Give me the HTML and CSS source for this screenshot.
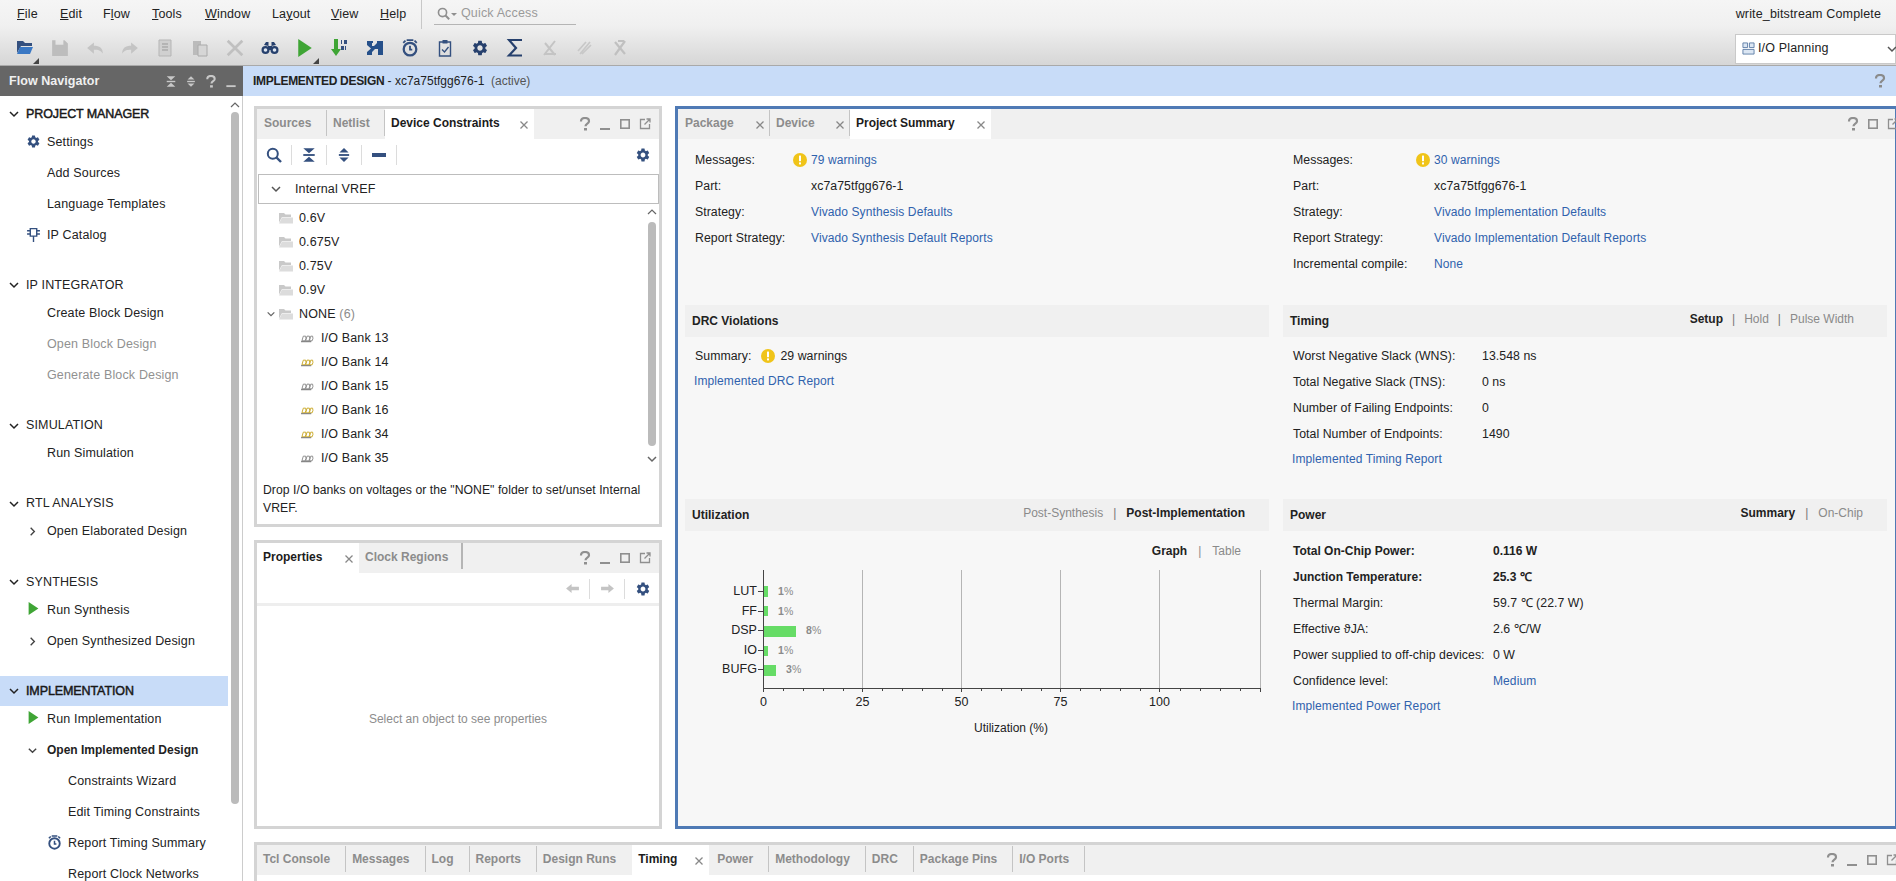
FILE: index.html
```html
<!DOCTYPE html>
<html lang="en">
<head>
<meta charset="utf-8">
<title>Vivado</title>
<link rel="stylesheet" href="styles.css">
</head>
<body>
<svg class="defs" xmlns="http://www.w3.org/2000/svg">
  <symbol id="gear" viewBox="0 0 24 24"><path fill-rule="evenodd" d="M19.14 12.94c.04-.3.06-.61.06-.94 0-.32-.02-.64-.07-.94l2.03-1.58a.49.49 0 0 0 .12-.61l-1.92-3.32a.488.488 0 0 0-.59-.22l-2.39.96c-.5-.38-1.03-.7-1.62-.94l-.36-2.54a.484.484 0 0 0-.48-.41h-3.84c-.24 0-.43.17-.47.41l-.36 2.54c-.59.24-1.13.57-1.62.94l-2.39-.96c-.22-.08-.47 0-.59.22L2.74 8.87c-.12.21-.08.47.12.61l2.03 1.58c-.05.3-.09.63-.09.94s.02.64.07.94l-2.03 1.58a.49.49 0 0 0-.12.61l1.92 3.32c.12.22.37.29.59.22l2.39-.96c.5.38 1.03.7 1.62.94l.36 2.54c.05.24.24.41.48.41h3.84c.24 0 .44-.17.47-.41l.36-2.54c.59-.24 1.13-.56 1.62-.94l2.39.96c.22.08.47 0 .59-.22l1.92-3.32c.12-.22.07-.47-.12-.61l-2.01-1.58zM12 15.6c-1.98 0-3.6-1.62-3.6-3.6s1.62-3.6 3.6-3.6 3.6 1.62 3.6 3.6-1.62 3.6-3.6 3.6z"/></symbol>
  <symbol id="chev" viewBox="0 0 12 12"><path d="M2 4l4 4 4-4" fill="none" stroke="currentColor" stroke-width="1.5"/></symbol>
  <symbol id="up" viewBox="0 0 12 12"><path d="M2 8l4-4 4 4" fill="none" stroke="currentColor" stroke-width="1.2"/></symbol>
  <symbol id="play" viewBox="0 0 16 16"><path d="M2 0l12 8-12 8z" fill="#3fa535"/></symbol>
  <symbol id="timer" viewBox="0 0 16 16"><circle cx="8" cy="9" r="5.6" fill="none" stroke="#34507f" stroke-width="2"/><path d="M8 6v3.5h2M5 1h6M2 3.5l2-2M14 3.5l-2-2" fill="none" stroke="#34507f" stroke-width="1.6"/></symbol>
  <symbol id="warn" viewBox="0 0 14 14"><circle cx="7" cy="7" r="7" fill="#f0c419"/><rect x="6" y="2.6" width="2" height="5.6" fill="#fff"/><rect x="6" y="9.4" width="2" height="2" fill="#fff"/></symbol>
  <symbol id="folder" viewBox="0 0 14 14"><path d="M0 2h5l1.500 1.500H12V6H3L0 11.500z" fill="#c9c9c9"/><path d="M0 12.500L3 6.500h11V12.500z" fill="#dcdcdc"/></symbol>
  <symbol id="bank" viewBox="0 0 14 10"><path d="M1 8l1.500-5h2.500q1 2.500-.5 5zM5 8l1.500-5h2.500q1 2.500-.5 5zM9 8l1.500-5h2q1 2.500-.5 5z" fill="none" stroke="currentColor" stroke-width="1"/><path d="M0 9h11" stroke="#666" stroke-width="1"/></symbol>
  <symbol id="q" viewBox="0 0 12 14"><path d="M2 4.500C2 2 3.800 1 6 1s4 1 4 3.200c0 2.500-3.500 2.300-3.500 5" fill="none" stroke="currentColor" stroke-width="2.200"/><rect x="5" y="11" width="3" height="2.500" fill="currentColor"/></symbol>
  <symbol id="min" viewBox="0 0 12 14"><rect x="1" y="11" width="10" height="2" fill="currentColor"/></symbol>
  <symbol id="max" viewBox="0 0 12 14"><rect x="1.800" y="2.800" width="8.400" height="8.400" fill="none" stroke="currentColor" stroke-width="1.600"/></symbol>
  <symbol id="ext" viewBox="0 0 12 14"><path d="M6 2.500H1.500v9h9V7M5.500 7.500L11 2M7.500 2H11v3.500" fill="none" stroke="currentColor" stroke-width="1.300"/></symbol>
  <symbol id="close" viewBox="0 0 10 10"><path d="M1.500 1.500l7 7M8.500 1.500l-7 7" fill="none" stroke="currentColor" stroke-width="1.300"/></symbol>
  <symbol id="collapse" viewBox="0 0 14 14"><path d="M2 1h10L7 5.500zM2 13h10L7 8.500z" fill="currentColor"/><rect x="2" y="6.200" width="10" height="1.600" fill="currentColor"/></symbol>
  <symbol id="expand" viewBox="0 0 14 14"><path d="M3 4.800h8L7 .8zM3 9.200h8l-4 4z" fill="currentColor"/><rect x="2.500" y="6.200" width="9" height="1.600" fill="currentColor"/></symbol>
  <symbol id="search" viewBox="0 0 16 16"><circle cx="6.800" cy="6.800" r="5" fill="none" stroke="currentColor" stroke-width="2"/><path d="M10.500 10.500l4.500 4.500" stroke="currentColor" stroke-width="2.400"/></symbol>
  <symbol id="left" viewBox="0 0 16 12"><path d="M1 6l6-5v3h8v4H7v3z" fill="currentColor"/></symbol>
  <symbol id="right" viewBox="0 0 16 12"><path d="M15 6L9 1v3H1v4h8v3z" fill="currentColor"/></symbol>
  <symbol id="ipcat" viewBox="0 0 14 14"><path d="M4 1.500h6v7H4zM7 8.500V14M1 3.500h3M1 6.500h3M10 3.500h3M10 6.500h3" fill="none" stroke="#34507f" stroke-width="1.300"/></symbol>
  <symbol id="open" viewBox="0 0 18 18"><path d="M1 2h6l2 2h7v3H5L1 14z" fill="#34507f"/><path d="M1 15l3-7h13l-3 7z" fill="#3a78c4"/></symbol>
  <symbol id="save" viewBox="0 0 16 16"><path d="M1 1h11l3 3v11H1zM4 1v4h7V1M4 15v-5h8v5" fill="#bdbdbd"/></symbol>
  <symbol id="undo" viewBox="0 0 16 14"><path d="M1 7l6-5v3c5 0 8 2 8 7-2-3-4-3.500-8-3.500V12z" fill="#c4c4c4"/></symbol>
  <symbol id="redo" viewBox="0 0 16 14"><path d="M15 7L9 2v3C4 5 1 7 1 12c2-3 4-3.500 8-3.500V12z" fill="#c4c4c4"/></symbol>
  <symbol id="copy" viewBox="0 0 16 18"><path d="M2 1h12v16H2z" fill="#d0d0d0" stroke="#b5b5b5"/><path d="M5 5h6M5 8h6M5 11h6" stroke="#999"/></symbol>
  <symbol id="paste" viewBox="0 0 16 18"><path d="M1 2h8v14H1z" fill="#bbb"/><path d="M6 6h9v11H6z" fill="#d6d6d6" stroke="#aaa"/></symbol>
  <symbol id="cross" viewBox="0 0 16 16"><path d="M1.500 1.500l13 13M14.500 1.500l-13 13" stroke="#c0c0c0" stroke-width="2.400"/></symbol>
  <symbol id="bino" viewBox="0 0 18 14"><circle cx="4.500" cy="9" r="4" fill="#26406d"/><circle cx="13.500" cy="9" r="4" fill="#26406d"/><path d="M3 4l2-3h2.500v4M15 4l-2-3h-2.500v4" fill="#26406d"/><rect x="7" y="5" width="4" height="4" fill="#26406d"/><circle cx="4.500" cy="9" r="1.800" fill="#dfe7f2"/><circle cx="13.500" cy="9" r="1.800" fill="#dfe7f2"/></symbol>
  <symbol id="bit" viewBox="0 0 18 18"><path d="M3 0h4v10h3l-5 7-5-7h3z" fill="#3fa535"/><path d="M10 1h1v4h-1zM13 1h3v4h-3zM10 7h3v4h-3zM14 7h1v4h-1z" fill="#34507f"/></symbol>
  <symbol id="route" viewBox="0 0 18 18"><path d="M1 2h6v2H6v3h2l3-3V2h6v14h-5v-6H9l-3 3v3H1v-3l4-3.500L1 6z" fill="#26508a"/></symbol>
  <symbol id="clip" viewBox="0 0 14 18"><path d="M1.500 3h11v14h-11z" fill="none" stroke="#34507f" stroke-width="1.400"/><path d="M4.500 1h5v3.500h-5z" fill="#34507f"/><path d="M4 10.500l2.500 2.500 4-5" fill="none" stroke="#34507f" stroke-width="1.300"/></symbol>
  <symbol id="sigma" viewBox="0 0 16 18"><path d="M15 1H2l7 8-7 7.500h13" fill="none" stroke="#26406d" stroke-width="2.200"/></symbol>
  <symbol id="d1" viewBox="0 0 16 18"><path d="M2 16L13 2M3 4l10 12M3 15h11" stroke="#c4c4c4" stroke-width="2" fill="none"/></symbol>
  <symbol id="d2" viewBox="0 0 16 18"><path d="M3 15L13 3M5 15l9-9M1 12l8-9" stroke="#c8c8c8" stroke-width="1.700" fill="none"/></symbol>
  <symbol id="d3" viewBox="0 0 16 18"><path d="M3 3l10 12M13 2L3 16M6 2l6 0" stroke="#c0c0c0" stroke-width="2.200" fill="none"/></symbol>
  <symbol id="layout" viewBox="0 0 14 14"><path d="M1 1h5v5H1zM8 1h5v5H8zM1 8h12v5H1z" fill="#dbe6f3" stroke="#5f7ea8"/></symbol>
</svg>

<header class="topbar">
  <div class="menurow">
    <nav class="menu">
      <span class="m1"><u>F</u>ile</span><span class="m2"><u>E</u>dit</span><span class="m3">F<u>l</u>ow</span><span class="m4"><u>T</u>ools</span><span class="m5"><u>W</u>indow</span><span class="m6">La<u>y</u>out</span><span class="m7"><u>V</u>iew</span><span class="m8"><u>H</u>elp</span>
    </nav>
    <div class="quick">
      <svg class="qi"><use href="#search"/></svg><span class="qcaret"></span><span>Quick Access</span>
    </div>
    <div class="status">write_bitstream Complete</div>
  </div>
  <div class="toolrow">
    <div class="tools">
      <span class="tb corner"><svg><use href="#open"/></svg></span>
      <span class="tb"><svg><use href="#save"/></svg></span>
      <span class="tb"><svg><use href="#undo"/></svg></span>
      <span class="tb"><svg><use href="#redo"/></svg></span>
      <span class="tb"><svg><use href="#copy"/></svg></span>
      <span class="tb"><svg><use href="#paste"/></svg></span>
      <span class="tb"><svg><use href="#cross"/></svg></span>
      <span class="tb"><svg><use href="#bino"/></svg></span>
      <span class="tb corner"><svg><use href="#play"/></svg></span>
      <span class="tb"><svg><use href="#bit"/></svg></span>
      <span class="tb"><svg><use href="#route"/></svg></span>
      <span class="tb"><svg><use href="#timer"/></svg></span>
      <span class="tb"><svg><use href="#clip"/></svg></span>
      <span class="tb gearblue"><svg><use href="#gear"/></svg></span>
      <span class="tb"><svg><use href="#sigma"/></svg></span>
      <span class="tb"><svg><use href="#d1"/></svg></span>
      <span class="tb"><svg><use href="#d2"/></svg></span>
      <span class="tb"><svg><use href="#d3"/></svg></span>
    </div>
    <div class="combo"><svg class="cicon"><use href="#layout"/></svg><span>I/O Planning</span><svg class="cchev"><use href="#chev"/></svg></div>
  </div>
</header>

<div class="workspace">
  <aside class="flownav">
    <div class="navhead">
      <span class="navtitle">Flow Navigator</span>
      <svg class="nh"><use href="#collapse"/></svg>
      <svg class="nh"><use href="#expand"/></svg>
      <svg class="nh"><use href="#q"/></svg>
      <svg class="nh"><use href="#min"/></svg>
    </div>
    <div class="navbody">
      <div class="navlist">
        <section class="navgroup">
          <div class="ghead strong"><svg class="gchev"><use href="#chev"/></svg>PROJECT MANAGER</div>
          <div class="nitem"><svg class="nicon navy"><use href="#gear"/></svg>Settings</div>
          <div class="nitem">Add Sources</div>
          <div class="nitem">Language Templates</div>
          <div class="nitem"><svg class="nicon"><use href="#ipcat"/></svg>IP Catalog</div>
        </section>
        <section class="navgroup">
          <div class="ghead"><svg class="gchev"><use href="#chev"/></svg>IP INTEGRATOR</div>
          <div class="nitem">Create Block Design</div>
          <div class="nitem off">Open Block Design</div>
          <div class="nitem off">Generate Block Design</div>
        </section>
        <section class="navgroup">
          <div class="ghead"><svg class="gchev"><use href="#chev"/></svg>SIMULATION</div>
          <div class="nitem">Run Simulation</div>
        </section>
        <section class="navgroup">
          <div class="ghead"><svg class="gchev"><use href="#chev"/></svg>RTL ANALYSIS</div>
          <div class="nitem"><svg class="nchev"><use href="#chev"/></svg>Open Elaborated Design</div>
        </section>
        <section class="navgroup">
          <div class="ghead"><svg class="gchev"><use href="#chev"/></svg>SYNTHESIS</div>
          <div class="nitem"><svg class="nicon small"><use href="#play"/></svg>Run Synthesis</div>
          <div class="nitem"><svg class="nchev"><use href="#chev"/></svg>Open Synthesized Design</div>
        </section>
        <section class="navgroup">
          <div class="ghead strong selected"><svg class="gchev"><use href="#chev"/></svg>IMPLEMENTATION</div>
          <div class="nitem"><svg class="nicon small"><use href="#play"/></svg>Run Implementation</div>
          <div class="nitem bold"><svg class="nchev open"><use href="#chev"/></svg>Open Implemented Design</div>
          <div class="nitem lvl3">Constraints Wizard</div>
          <div class="nitem lvl3">Edit Timing Constraints</div>
          <div class="nitem lvl3"><svg class="nicon sub"><use href="#timer"/></svg>Report Timing Summary</div>
          <div class="nitem lvl3">Report Clock Networks</div>
        </section>
      </div>
      <div class="vscroll navscroll"><svg class="sa"><use href="#up"/></svg><div class="thumb"></div></div>
    </div>
  </aside>

  <main class="main">
    <div class="banner"><b>IMPLEMENTED DESIGN</b>&nbsp;- xc7a75tfgg676-1&nbsp;&nbsp;<span class="active">(active)</span><svg class="bq"><use href="#q"/></svg></div>
    <div class="panes">
      <div class="leftcol">
        <section class="panel sources">
          <div class="tabbar">
            <span class="tab sep w70">Sources</span><span class="tab sep w58">Netlist</span><span class="tab on w150">Device Constraints<svg class="x"><use href="#close"/></svg></span>
            <span class="winctl"><svg><use href="#q"/></svg><svg><use href="#min"/></svg><svg><use href="#max"/></svg><svg><use href="#ext"/></svg></span>
          </div>
          <div class="ptools">
            <span class="pt"><svg><use href="#search"/></svg></span><span class="pt"><svg><use href="#collapse"/></svg></span><span class="pt"><svg><use href="#expand"/></svg></span><span class="pt"><i class="minbar"></i></span>
            <span class="pgear"><svg><use href="#gear"/></svg></span>
          </div>
          <div class="vrefbox"><svg class="vchev"><use href="#chev"/></svg>Internal VREF</div>
          <div class="treewrap">
            <div class="tree">
              <div class="trow v"><svg class="fold"><use href="#folder"/></svg>0.6V</div>
              <div class="trow v"><svg class="fold"><use href="#folder"/></svg>0.675V</div>
              <div class="trow v"><svg class="fold"><use href="#folder"/></svg>0.75V</div>
              <div class="trow v"><svg class="fold"><use href="#folder"/></svg>0.9V</div>
              <div class="trow n"><svg class="tchev"><use href="#chev"/></svg><svg class="fold"><use href="#folder"/></svg>NONE&nbsp;<span class="cnt">(6)</span></div>
              <div class="trow b gr"><svg class="bk"><use href="#bank"/></svg>I/O Bank 13</div>
              <div class="trow b ye"><svg class="bk"><use href="#bank"/></svg>I/O Bank 14</div>
              <div class="trow b gr"><svg class="bk"><use href="#bank"/></svg>I/O Bank 15</div>
              <div class="trow b ye"><svg class="bk"><use href="#bank"/></svg>I/O Bank 16</div>
              <div class="trow b ye"><svg class="bk"><use href="#bank"/></svg>I/O Bank 34</div>
              <div class="trow b gr"><svg class="bk"><use href="#bank"/></svg>I/O Bank 35</div>
            </div>
            <div class="vscroll treescroll"><svg class="sa"><use href="#up"/></svg><div class="thumb"></div><svg class="sa"><use href="#chev"/></svg></div>
          </div>
          <p class="hint">Drop I/O banks on voltages or the "NONE" folder to set/unset Internal VREF.</p>
        </section>
        <section class="panel props">
          <div class="tabbar">
            <span class="tab on w97">Properties<svg class="x"><use href="#close"/></svg></span><span class="tab thick">Clock Regions</span>
            <span class="winctl"><svg><use href="#q"/></svg><svg><use href="#min"/></svg><svg><use href="#max"/></svg><svg><use href="#ext"/></svg></span>
          </div>
          <div class="ptools end">
            <span class="pa"><svg><use href="#left"/></svg></span><span class="pa"><svg><use href="#right"/></svg></span><span class="pgear solo"><svg><use href="#gear"/></svg></span>
          </div>
          <div class="empty">Select an object to see properties</div>
        </section>
      </div>

      <section class="summary">
        <div class="tabbar blue">
          <span class="tab sep wp">Package<svg class="x"><use href="#close"/></svg></span><span class="tab sep wd">Device<svg class="x"><use href="#close"/></svg></span><span class="tab on ws">Project Summary<svg class="x"><use href="#close"/></svg></span>
          <span class="winctl tight"><svg><use href="#q"/></svg><svg><use href="#max"/></svg><svg><use href="#ext"/></svg></span>
        </div>
        <div class="grid">
          <div class="cell c1">
            <div class="kv k116"><span>Messages:</span><span class="val"><svg class="warn"><use href="#warn"/></svg><a>79 warnings</a></span></div>
            <div class="kv k116"><span>Part:</span><span>xc7a75tfgg676-1</span></div>
            <div class="kv k116"><span>Strategy:</span><a>Vivado Synthesis Defaults</a></div>
            <div class="kv k116"><span>Report Strategy:</span><a>Vivado Synthesis Default Reports</a></div>
          </div>
          <div class="cell c1">
            <div class="kv k141"><span>Messages:</span><span class="val"><svg class="warn"><use href="#warn"/></svg><a>30 warnings</a></span></div>
            <div class="kv k141"><span>Part:</span><span>xc7a75tfgg676-1</span></div>
            <div class="kv k141"><span>Strategy:</span><a>Vivado Implementation Defaults</a></div>
            <div class="kv k141"><span>Report Strategy:</span><a>Vivado Implementation Default Reports</a></div>
            <div class="kv k141"><span>Incremental compile:</span><a>None</a></div>
          </div>
          <div class="cell">
            <div class="sechead"><b>DRC Violations</b></div>
            <div class="sbody">
              <div class="kv inline"><span>Summary:</span><svg class="warn"><use href="#warn"/></svg><span>29 warnings</span></div>
              <a class="rpt">Implemented DRC Report</a>
            </div>
          </div>
          <div class="cell">
            <div class="sechead"><b>Timing</b><span class="lnks pad9"><b>Setup</b><i>|</i><span>Hold</span><i>|</i><span>Pulse Width</span></span></div>
            <div class="sbody">
              <div class="kv k190"><span>Worst Negative Slack (WNS):</span><span>13.548 ns</span></div>
              <div class="kv k190"><span>Total Negative Slack (TNS):</span><span>0 ns</span></div>
              <div class="kv k190"><span>Number of Failing Endpoints:</span><span>0</span></div>
              <div class="kv k190"><span>Total Number of Endpoints:</span><span>1490</span></div>
              <a class="rpt">Implemented Timing Report</a>
            </div>
          </div>
          <div class="cell">
            <div class="sechead"><b>Utilization</b><span class="lnks"><span>Post-Synthesis</span><i>|</i><b>Post-Implementation</b></span></div>
            <div class="graphlinks"><b>Graph</b><i>|</i><span>Table</span></div>
            <svg class="chart" viewBox="0 0 584 175">
              <g class="gridl"><path d="M177.500 9V127M276.500 9V127M375.500 9V127M474.500 9V127M575.500 9V127"/></g>
              <g class="bars"><rect x="79" y="25" width="4" height="11"/><rect x="79" y="45" width="4" height="10"/><rect x="79" y="65" width="32" height="11"/><rect x="79" y="85" width="4" height="10"/><rect x="79" y="104" width="12" height="11"/></g>
              <path class="axis" d="M78.500 9V127H575.500M73 30h5M73 50h5M73 69h5M73 89h5M73 108h5M78.500 127v4M98.500 127v3M118.500 127v3M138.500 127v3M158.500 127v3M177.500 127v4M197.500 127v3M217.500 127v3M237.500 127v3M257.500 127v3M276.500 127v4M296.500 127v3M316.500 127v3M336.500 127v3M356.500 127v3M375.500 127v4M395.500 127v3M415.500 127v3M435.500 127v3M455.500 127v3M474.500 127v4M495.500 127v3M515.500 127v3M535.500 127v3M555.500 127v3M575.500 127v4"/>
              <g class="lab"><text x="72" y="34">LUT</text><text x="72" y="54">FF</text><text x="72" y="73">DSP</text><text x="72" y="93">IO</text><text x="72" y="112">BUFG</text></g>
              <g class="pct"><text x="93" y="34"><tspan class="pb">1</tspan>%</text><text x="93" y="54"><tspan class="pb">1</tspan>%</text><text x="121" y="73"><tspan class="pb">8</tspan>%</text><text x="93" y="93"><tspan class="pb">1</tspan>%</text><text x="101" y="112"><tspan class="pb">3</tspan>%</text></g>
              <g class="tick"><text x="78.500" y="145">0</text><text x="177.500" y="145">25</text><text x="276.500" y="145">50</text><text x="375.500" y="145">75</text><text x="474.500" y="145">100</text><text class="axt" x="326" y="171">Utilization (%)</text></g>
            </svg>
          </div>
          <div class="cell">
            <div class="sechead"><b>Power</b><span class="lnks"><b>Summary</b><i>|</i><span>On-Chip</span></span></div>
            <div class="sbody pw">
              <div class="kv k200 bold"><span>Total On-Chip Power:</span><span>0.116 W</span></div>
              <div class="kv k200 bold"><span>Junction Temperature:</span><span>25.3 ℃</span></div>
              <div class="kv k200"><span>Thermal Margin:</span><span>59.7 ℃ (22.7 W)</span></div>
              <div class="kv k200"><span>Effective ϑJA:</span><span>2.6 ℃/W</span></div>
              <div class="kv k200"><span>Power supplied to off-chip devices:</span><span>0 W</span></div>
              <div class="kv k200"><span>Confidence level:</span><a>Medium</a></div>
              <a class="rpt">Implemented Power Report</a>
            </div>
          </div>
        </div>
      </section>
    </div>
    <section class="panel bottom">
      <div class="tabbar">
        <span class="tab sep">Tcl Console</span><span class="tab sep">Messages</span><span class="tab sep">Log</span><span class="tab sep">Reports</span><span class="tab">Design Runs</span><span class="tab on wt">Timing<svg class="x"><use href="#close"/></svg></span><span class="tab sep">Power</span><span class="tab sep">Methodology</span><span class="tab sep">DRC</span><span class="tab sep">Package Pins</span><span class="tab sep">I/O Ports</span>
        <span class="winctl flush"><svg><use href="#q"/></svg><svg><use href="#min"/></svg><svg><use href="#max"/></svg><svg><use href="#ext"/></svg></span>
      </div>
    </section>
  </main>
</div>
</body>
</html>
```
FILE: styles.css
```css
* { box-sizing: border-box; }
html, body { margin: 0; height: 881px; overflow: hidden; }
body {
  width: 1896px;
  background: #fff;
  color: #222;
  font: 12.500px/1.2 "Liberation Sans", Arial, sans-serif;
  letter-spacing: .15px;
}
.defs { display: none; }
svg { display: block; flex: none; }
a { color: #2f62ad; }
i { font-style: normal; }

.topbar {
  height: 66px;
  background: linear-gradient(#f5f5f5, #f0f0f0 40%, #d6d6d6);
  border-bottom: 1px solid #a9a9a9;
}
.menurow { height: 29px; display: flex; align-items: flex-start; }
.menu { display: flex; width: 422px; height: 29px; padding-top: 7px; border-right: 1px solid #c8c8c8; }
.menu span { display: block; }
.menu u { text-decoration-thickness: 1px; text-underline-offset: 1px; }
.m1 { margin-left: 17px; width: 43px; }
.m2 { width: 43px; }
.m3 { width: 49px; }
.m4 { width: 53px; }
.m5 { width: 67px; }
.m6 { width: 59px; }
.m7 { width: 49px; }
.quick {
  display: flex; align-items: center; width: 142px; height: 25px;
  margin-left: 12px; padding: 2px 0 0 3px; color: #9a9a9a; border-bottom: 1px solid #b5b5b5;
}
.qi { width: 13px; height: 13px; color: #8f8f8f; }
.qcaret { width: 0; height: 0; margin: 2px 4px 0 1px; border: 3px solid transparent; border-top-color: #8f8f8f; border-bottom: 0; }
.status { margin-left: auto; padding: 7px 15px 0 0; }
.toolrow { height: 36px; display: flex; align-items: center; }
.tools { display: flex; padding-left: 7px; height: 30px; align-items: center; margin-top: 2px; }
.tb { width: 35px; height: 22px; display: flex; align-items: center; justify-content: center; position: relative; }
.tb svg { width: 18px; height: 18px; }
.corner::after {
  content: ""; position: absolute; right: 3px; bottom: -5px; width: 0; height: 0;
  border-style: solid; border-width: 0 0 6px 6px; border-color: transparent transparent #444 transparent;
}
.gearblue { fill: #26406d; }
.combo {
  margin-left: auto; width: 161px; height: 30px; margin-top: 3px; background: #fff;
  border: 1px solid #c9c9c9; display: flex; align-items: center; padding-left: 6px; position: relative;
}
.cicon { width: 13px; height: 13px; margin-right: 3px; }
.cchev { width: 12px; height: 12px; margin-left: auto; margin-right: -3px; color: #555; }

.workspace { display: flex; height: 815px; }
.flownav { width: 243px; flex: none; display: flex; flex-direction: column; border-right: 1px solid #ccc; }
.navhead { height: 30px; background: #666; color: #f0f0f0; display: flex; align-items: center; padding: 0 4px 0 9px; gap: 6px; flex: none; margin-right: -1px; }
.navtitle { font-weight: bold; margin-right: auto; font-size: 12.500px; letter-spacing: .05px; }
.nh { width: 12px; height: 13px; color: #c8c8c8; margin-right: 2px; }
.navbody { flex: 1; display: flex; min-height: 0; }
.navlist { width: 228px; padding-top: 3px; }
.navgroup { margin-bottom: 19.750px; }
.ghead { height: 30px; display: flex; align-items: center; padding-left: 8px; margin-bottom: -2.500px; color: #222; }
.ghead.strong { -webkit-text-stroke: .45px #111; letter-spacing: -.1px; }
.ghead.selected { background: #c8dcf8; }
.gchev { width: 12px; height: 12px; margin-right: 6px; color: #222; }
.nitem { height: 31px; display: flex; align-items: center; padding-left: 47px; position: relative; white-space: nowrap; }
.off { color: #919191; }
.nitem.bold { font-weight: bold; font-size: 12px; letter-spacing: 0; }
.lvl3 { padding-left: 68px; }
.nicon { position: absolute; left: 26px; top: 7px; width: 15px; height: 15px; }
.nicon.small { left: 27px; width: 13px; top: 6px; height: 15px; }
.nicon.sub { left: 47px; }
.navy { fill: #34507f; }
.nchev { position: absolute; left: 27px; top: 10px; width: 11px; height: 11px; color: #444; transform: rotate(-90deg); }
.nchev.open { transform: none; left: 27px; }
.vscroll { display: flex; flex-direction: column; align-items: center; }
.sa { width: 12px; height: 12px; color: #666; flex: none; }
.thumb { width: 8px; background: #bbb; border-radius: 4px; }
.navscroll { width: 14px; padding-top: 3px; }
.navscroll .thumb { height: 692px; margin-top: 1px; }

.main { flex: 1; min-width: 0; }
.banner {
  height: 30px; background: #c8dcf8; display: flex; align-items: center; padding: 0 10px;
  font-size: 12px; letter-spacing: 0;
}
.banner b { letter-spacing: -.3px; }
.active { color: #555; }
.bq { width: 12px; height: 14px; margin-left: auto; color: #8a8a8a; }
.panes { display: flex; padding: 10px 0 0 11px; gap: 13px; height: 733px; }
.leftcol { width: 408px; flex: none; display: flex; flex-direction: column; gap: 13px; }
.panel { border: 3px solid #d4d4d4; background: #fff; display: flex; flex-direction: column; }
.sources { height: 421px; }
.props { height: 289px; }
.bottom { margin: 13px 0 0 11px; height: 60px; border-bottom: 0; border-right: 0; }

.tabbar { height: 30px; background: #f0f0f0; display: flex; align-items: stretch; flex: none; }
.tab {
  display: flex; align-items: center; padding: 0 15px 1px 6px; font-weight: bold; color: #8c8c8c; font-size: 12px;
  letter-spacing: 0; position: relative; white-space: nowrap;
}
.tab.sep::after, .tab.thick::after {
  content: ""; position: absolute; right: 0; top: 1px; bottom: 3px; width: 1px; background: #c4c4c4;
}
.tab.thick::after { width: 2px; background: #b5b5b5; top: 0; bottom: 4px; }
.tab.on { background: #fff; color: #1c1c1c; }
.bottom .tab { padding-right: 16px; }
.bottom .tab.on + .tab { margin-left: 2px; }
.x { width: 10px; height: 10px; color: #888; position: absolute; right: 5px; top: 11px; }
.w70 { width: 70px; padding-left: 7px; }
.w58 { width: 58px; }
.w150 { width: 149px; }
.w97 { width: 102px; }
.wp { width: 92px; padding-left: 7px; }
.wd { width: 80px; }
.ws { width: 141px; }
.wt { width: 77px; }
.winctl { margin-left: auto; display: flex; gap: 8px; align-items: center; padding: 0 8px 0 0; color: #8f8f8f; }
.winctl svg { width: 12px; height: 14px; }
.winctl.tight { padding-right: 0; margin-right: -4px; }
.winctl.flush { padding-right: 0; margin-right: -2px; }

.ptools { height: 31px; display: flex; align-items: center; flex: none; }
.pt { width: 35px; height: 20px; display: flex; align-items: center; justify-content: center; border-right: 1px solid #dcdcdc; color: #34507f; }
.pt svg { width: 16px; height: 16px; }
.minbar { display: block; width: 14px; height: 4px; background: #34507f; }
.pgear { margin-left: auto; margin-right: 8px; width: 16px; fill: #34507f; }
.pgear svg { width: 16px; height: 16px; }
.pgear.solo { margin-left: 10px; }
.end { justify-content: flex-end; height: 33px; padding-top: 1px; border-bottom: 3px solid #eee; }
.pa { width: 35px; height: 20px; display: flex; align-items: center; justify-content: center; border-right: 1px solid #dcdcdc; color: #c4c4c4; }
.pa svg { width: 15px; height: 11px; }
.vrefbox {
  height: 30px; margin: 4px 0 0 1px; border: 1px solid #bdbdbd; display: flex; align-items: center; padding-left: 11px; flex: none;
}
.vchev { width: 12px; height: 12px; color: #555; margin-right: 13px; }
.treewrap { display: flex; height: 266px; flex: none; }
.tree { flex: 1; padding-top: 2px; }
.trow { height: 24px; display: flex; align-items: center; position: relative; }
.trow.v { padding-left: 22px; }
.trow.n { padding-left: 9px; }
.fold { width: 14px; height: 14px; margin-right: 6px; }
.tchev { width: 10px; height: 10px; color: #666; margin-right: 3px; }
.cnt { color: #8c8c8c; }
.trow.b { padding-left: 44px; color: #222; }
.bk { width: 13px; height: 10px; margin-right: 7px; }
.gr .bk { color: #888; }
.ye .bk { color: #c9a825; }
.treescroll { width: 14px; padding-top: 2px; }
.treescroll .thumb { height: 224px; margin: 4px 0 7px; }
.hint { margin: 0; padding: 11px 3px 0 6px; line-height: 18px; font-size: 12.200px; letter-spacing: .05px; }
.empty { flex: 1; display: flex; align-items: center; justify-content: center; color: #8d8d8d; padding-top: 6px; font-size: 12px; letter-spacing: 0; }

.summary {
  flex: 1; min-width: 0; height: 723px; margin-right: -2px; border: 3px solid #4f7ab5; background: #f7f7f7;
  display: flex; flex-direction: column;
}
.grid { display: grid; grid-template-columns: 584px 604px; column-gap: 14px; grid-template-rows: 166px 194px 1fr; padding-left: 7px; font-size: 12.300px; letter-spacing: .05px; }
.grid a { font-size: 12px; letter-spacing: .1px; }
.cell { min-width: 0; }
.c1 { padding-top: 8px; }
.kv { height: 26px; display: grid; align-items: center; padding-left: 10px; white-space: nowrap; }
.k116 { grid-template-columns: 116px 1fr; }
.k141 { grid-template-columns: 141px 1fr; }
.k190 { grid-template-columns: 189px 1fr; }
.k200 { grid-template-columns: 200px 1fr; }
.kv.bold { font-weight: bold; font-size: 12px; letter-spacing: 0; }
.val { position: relative; display: block; }
.warn { width: 14px; height: 14px; }
.val .warn { position: absolute; left: -18px; top: 0; }
.inline { display: flex; gap: 5px; }
.inline .warn { margin-left: 5px; }
.sechead {
  height: 32px; background: #f0f0f0; display: flex; align-items: center; padding: 0 24px 0 7px; font-size: 12px; letter-spacing: 0;
}
.sechead > b { padding-top: 1px; }
.lnks { margin-left: auto; color: #8a8a8a; display: flex; padding-bottom: 3px; }
.lnks.pad9 { margin-right: 9px; }
.lnks b { color: #222; }
.lnks i { margin: 0 10px; color: #777; font-weight: normal; }
.lnks.pad9 i { margin: 0 9px; }
.sbody { padding-top: 6px; }
.rpt { display: block; height: 24px; line-height: 25px; padding-left: 9px; }
.pw { padding-top: 7px; }
.graphlinks { height: 30px; display: flex; justify-content: flex-end; align-items: center; padding-right: 28px; padding-top: 10px; font-size: 12px; letter-spacing: 0; color: #8a8a8a; }
.graphlinks b { color: #222; }
.graphlinks i { margin: 0 11px; }
.chart { width: 584px; height: 175px; }
.gridl path { stroke: #b5b5b5; fill: none; }
.axis { stroke: #444; fill: none; shape-rendering: crispEdges; }
.bars rect { fill: #66dc66; }
.lab text { text-anchor: end; font-size: 12.500px; fill: #222; }
.pct text { font-size: 10.500px; fill: #8a8a8a; }
.pb { font-weight: bold; }
.tick text { text-anchor: middle; font-size: 12.500px; fill: #222; }
.tick .axt { font-size: 12px; letter-spacing: 0; }
```
